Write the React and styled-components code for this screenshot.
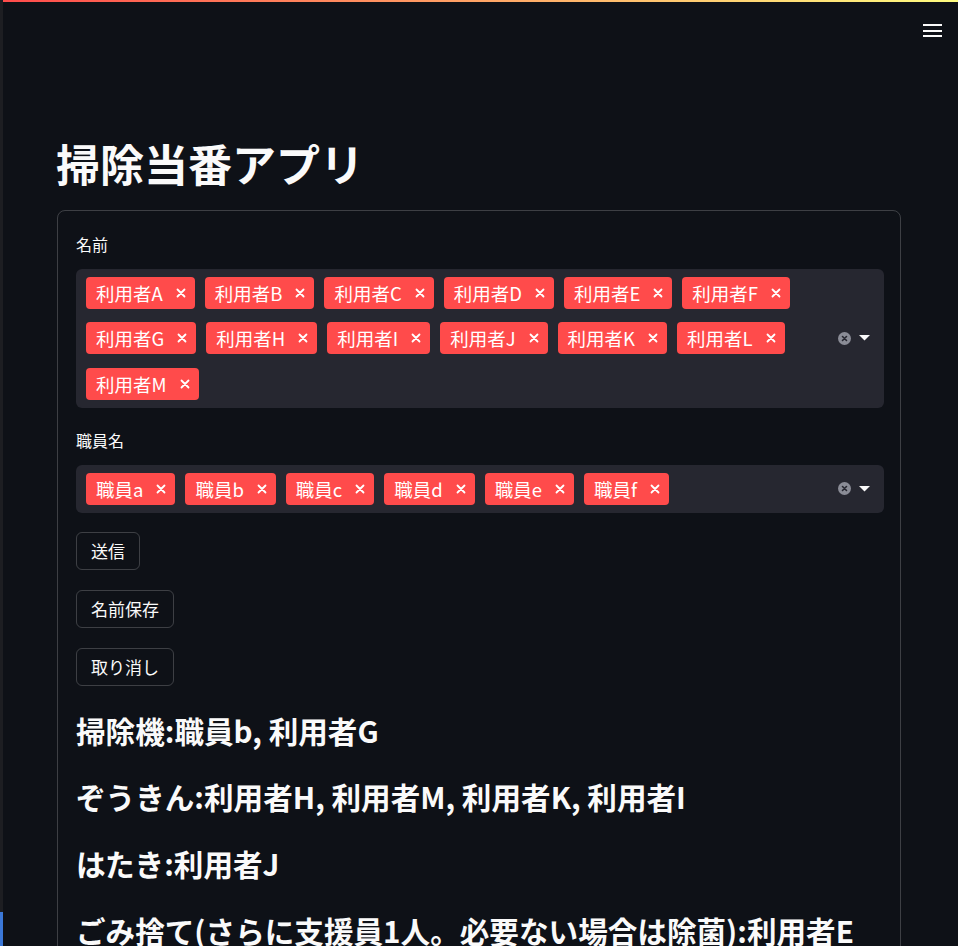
import React from "react";
import styled, { createGlobalStyle } from "styled-components";

const GlobalStyle = createGlobalStyle`
  html, body {
    margin: 0;
    padding: 0;
    background: #0e1117;
    overflow: hidden;
  }
  body {
    font-family: "Noto Sans CJK JP", "Noto Sans", sans-serif;
    color: #fafafa;
  }
  * { box-sizing: border-box; }
`;

const users = ["A", "B", "C", "D", "E", "F", "G", "H", "I", "J", "K", "L", "M"].map(
    (l) => `利用者${l}`
);
const staff = ["a", "b", "c", "d", "e", "f"].map((l) => `職員${l}`);

const results = [
    "掃除機:職員b, 利用者G",
    "ぞうきん:利用者H, 利用者M, 利用者K, 利用者I",
    "はたき:利用者J",
    "ごみ捨て(さらに支援員1人。必要ない場合は除菌):利用者E",
];

const CloseIcon = () => (
    <svg width="10" height="10" viewBox="0 0 10 10">
        <path d="M1.5 1.5 L8.5 8.5 M8.5 1.5 L1.5 8.5" stroke="#fff" strokeWidth="1.8" strokeLinecap="round" />
    </svg>
);

const ClearIcon = () => (
    <svg width="13" height="13" viewBox="0 0 13 13">
        <circle cx="6.5" cy="6.5" r="6.5" fill="#8a8c96" />
        <path d="M4.5 4.5 L8.5 8.5 M8.5 4.5 L4.5 8.5" stroke="#262730" strokeWidth="1.6" strokeLinecap="round" />
    </svg>
);

const CaretIcon = () => (
    <svg width="11" height="6" viewBox="0 0 11 6">
        <path d="M0 0 L11 0 L5.5 5.5 Z" fill="#fafafa" />
    </svg>
);

const MultiSelect = ({ label, items, spacing }) => (
    <Field $spacing={spacing}>
        <Label>{label}</Label>
        <SelectBox>
            <Values>
                {items.map((it) => (
                    <Chip key={it}>
                        <span>{it}</span>
                        <CloseIcon />
                    </Chip>
                ))}
            </Values>
            <Indicators>
                <ClearIcon />
                <CaretIcon />
            </Indicators>
        </SelectBox>
    </Field>
);

const App = () => {
    return (
        <>
            <GlobalStyle />
            <Page>
                <LeftEdge />
                <Decoration />
                <Header>
                    <Burger>
                        <span />
                        <span />
                        <span />
                    </Burger>
                </Header>
                <Content>
                    <Title>掃除当番アプリ</Title>
                    <Form>
                        <MultiSelect label="名前" items={users} spacing="22px" />
                        <MultiSelect label="職員名" items={staff} spacing="19px" />
                        <ButtonStack>
                            <Button>送信</Button>
                            <Button>名前保存</Button>
                            <Button>取り消し</Button>
                        </ButtonStack>
                        <ResultList>
                            {results.map((r) => (
                                <Result key={r}>{r}</Result>
                            ))}
                        </ResultList>
                    </Form>
                </Content>
            </Page>
        </>
    );
};

export default App;

const Page = styled.div`
    position: relative;
    width: 958px;
    height: 946px;
    overflow: hidden;
    background: #0e1117;
`;

const LeftEdge = styled.div`
    position: absolute;
    left: 0;
    top: 0;
    bottom: 0;
    width: 3px;
    background: linear-gradient(
        to bottom,
        #1d1e22 0,
        #1d1e22 912px,
        #3b78d8 912px,
        #3b78d8 100%
    );
`;

const Decoration = styled.div`
    height: 2px;
    background: linear-gradient(90deg, #ff4b4b, #fffd80);
`;

const Header = styled.div`
    height: 58px;
    display: flex;
    justify-content: flex-end;
    align-items: flex-start;
    padding: 22px 16px 0 0;
`;

const Burger = styled.div`
    width: 19px;
    height: 13px;
    display: flex;
    flex-direction: column;
    justify-content: space-between;
    span {
        display: block;
        height: 2px;
        background: #fafafa;
    }
`;

const Content = styled.div`
    width: 844px;
    margin: 0 auto;
`;

const Title = styled.h1`
    margin: 77px 0 20px -1px;
    font-size: 44px;
    line-height: 1.2;
    font-weight: 700;
    color: #fafafa;
`;

const Form = styled.div`
    border: 1px solid rgba(250, 250, 250, 0.2);
    border-radius: 8px;
    padding: 23px 16px 80px 18px;
    display: flex;
    flex-direction: column;
`;

const Field = styled.div`
    margin-bottom: ${(p) => p.$spacing};
`;

const Label = styled.div`
    font-size: 16px;
    line-height: 21px;
    margin-bottom: 14px;
    color: #fafafa;
`;

const SelectBox = styled.div`
    display: flex;
    align-items: center;
    background: #262730;
    border-radius: 6px;
    padding: 8px 0 8px 10px;
`;

const Values = styled.div`
    flex: 1;
    display: flex;
    flex-wrap: wrap;
    gap: 13.5px 10px;
`;

const Chip = styled.div`
    display: inline-flex;
    align-items: center;
    gap: 13px;
    height: 32px;
    padding: 0 9px 0 10px;
    background: #ff4b4b;
    border-radius: 4px;
    font-size: 18.5px;
    color: #fff;
    white-space: nowrap;
    svg {
        flex: none;
    }
`;

const Indicators = styled.div`
    display: flex;
    align-items: center;
    gap: 8px;
    padding: 0 14px 0 8px;
`;

const ButtonStack = styled.div`
    display: flex;
    flex-direction: column;
    align-items: flex-start;
    gap: 20px;
    margin-bottom: 27px;
`;

const Button = styled.button`
    height: 38px;
    padding: 0 14px;
    background: transparent;
    border: 1px solid rgba(250, 250, 250, 0.2);
    border-radius: 6px;
    color: #fafafa;
    font-family: inherit;
    font-size: 17px;
    cursor: pointer;
`;

const ResultList = styled.div`
    display: flex;
    flex-direction: column;
    gap: 30.7px;
`;

const Result = styled.h3`
    margin: 0;
    font-size: 29.6px;
    line-height: 36px;
    font-weight: 700;
    color: #fafafa;
    white-space: nowrap;
`;
